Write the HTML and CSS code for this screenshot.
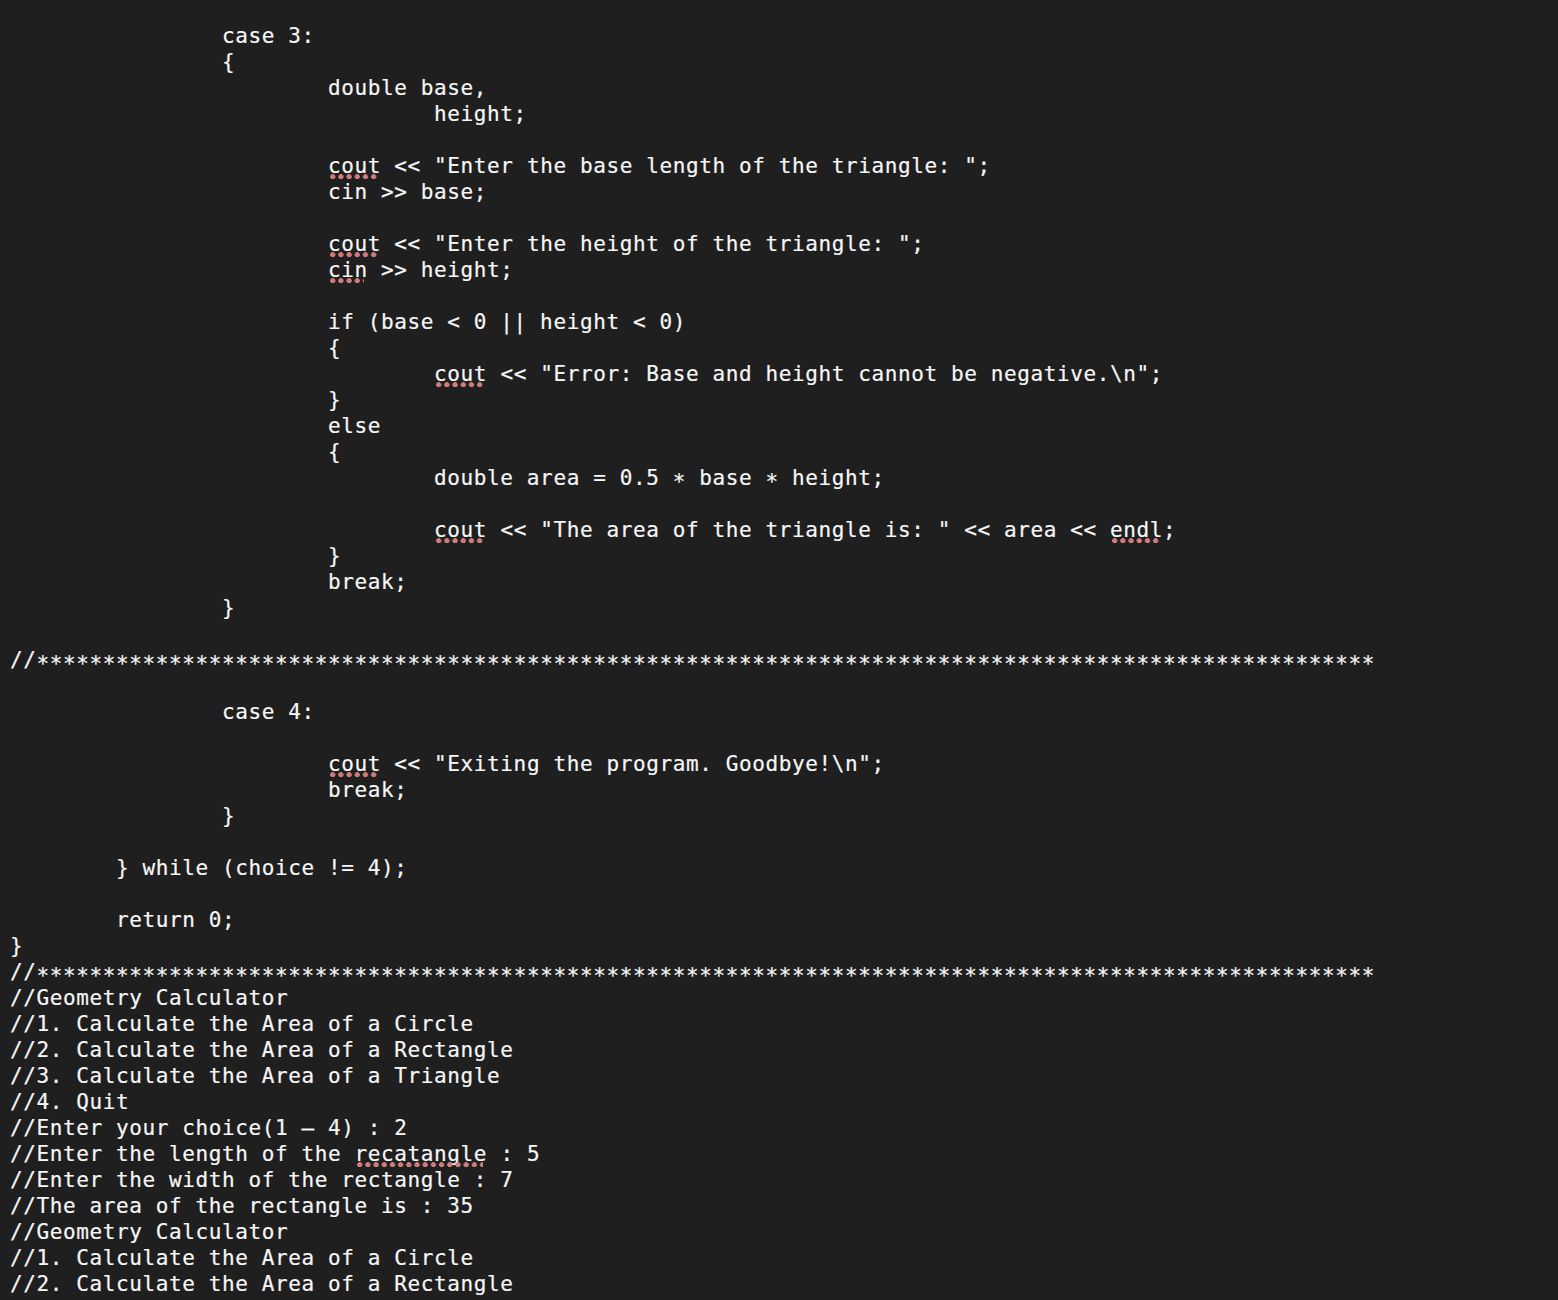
FILE: index.html
```html
<!DOCTYPE html>
<html lang="en">
<head>
<meta charset="utf-8">
<title>Geometry Calculator</title>
<link rel="stylesheet" href="styles.css">
</head>
<body>
<pre class="code">                case 3:
                {
                        double base,
                                height;

                        <span class="sp">cout</span> &lt;&lt; "Enter the base length of the triangle: ";
                        cin &gt;&gt; base;

                        <span class="sp">cout</span> &lt;&lt; "Enter the height of the triangle: ";
                        <span class="sp">cin</span> &gt;&gt; height;

                        if (base &lt; 0 || height &lt; 0)
                        {
                                <span class="sp">cout</span> &lt;&lt; "Error: Base and height cannot be negative.\n";
                        }
                        else
                        {
                                double area = 0.5 <span class="ast">*</span> base <span class="ast">*</span> height;

                                <span class="sp">cout</span> &lt;&lt; "The area of the triangle is: " &lt;&lt; area &lt;&lt; <span class="sp">endl</span>;
                        }
                        break;
                }

//<span class="ast">*****************************************************************************************************</span>

                case 4:

                        <span class="sp">cout</span> &lt;&lt; "Exiting the program. Goodbye!\n";
                        break;
                }

        } while (choice != 4);

        return 0;
}
//<span class="ast">*****************************************************************************************************</span>
//Geometry Calculator
//1. Calculate the Area of a Circle
//2. Calculate the Area of a Rectangle
//3. Calculate the Area of a Triangle
//4. Quit
//Enter your choice(1 – 4) : 2
//Enter the length of the <span class="sp">recatangle</span> : 5
//Enter the width of the rectangle : 7
//The area of the rectangle is : 35
//Geometry Calculator
//1. Calculate the Area of a Circle
//2. Calculate the Area of a Rectangle
</pre>
</body>
</html>
```

FILE: styles.css
```css
html, body {
  margin: 0;
  padding: 0;
  background: #1f1f1f;
  height: 100%;
  overflow: hidden;
}

.code {
  margin: 0;
  padding: 23px 0 0 10px;
  font-family: "DejaVu Sans Mono", "Liberation Mono", monospace;
  font-size: 21px;
  letter-spacing: 0.61px;
  line-height: 26px;
  color: #f6f6f6;
  -webkit-text-stroke: 0.2px #f6f6f6;
  white-space: pre;
}

.ast {
  display: inline-block;
  transform: translateY(4px);
}

.sp {
  position: relative;
}

.sp::after {
  content: "";
  position: absolute;
  left: 2px;
  right: 4px;
  top: 20px;
  height: 6px;
  background-image: radial-gradient(circle at 2.7px 2.7px, #d27b7b 2.3px, rgba(210, 123, 123, 0) 2.8px);
  background-size: 8.2px 6px;
  background-repeat: repeat-x;
}
```
